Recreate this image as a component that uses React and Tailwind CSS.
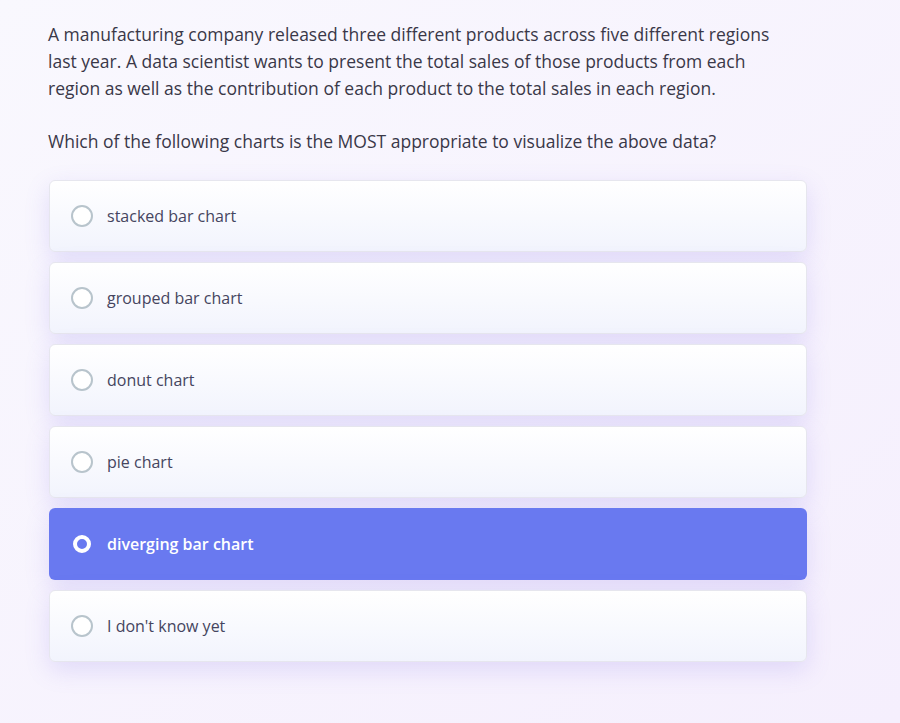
const OPTIONS = [
  "stacked bar chart",
  "grouped bar chart",
  "donut chart",
  "pie chart",
  "diverging bar chart",
  "I don't know yet",
];

export default function App() {
  const selected = 4;

  return (
    <div
      className="min-h-[723px] w-[900px] bg-gradient-to-br from-[#f9f8fe] to-[#f5effd] px-12 pt-[21px] text-[#3a3848]"
      style={{ fontFamily: "'Open Sans', sans-serif" }}
    >
      <div className="w-[748px]">
        <p className="text-[17.5px] leading-[27px]">
          A manufacturing company released three different products across five different regions last year. A data scientist wants to present the total sales of those products from each region as well as the contribution of each product to the total sales in each region.
        </p>
        <p className="mt-[26px] text-[17.5px] leading-[27px]">
          Which of the following charts is the MOST appropriate to visualize the above data?
        </p>
      </div>

      <div className="ml-px mt-[25px] flex w-[758px] flex-col gap-[10px]">
        {OPTIONS.map((label, i) => {
          const active = i === selected;
          return (
            <div
              key={label}
              className={
                active
                  ? "flex h-[72px] items-center rounded-md bg-[#6979f0] pl-[24px] shadow-[0_8px_24px_rgba(120,100,230,0.18)]"
                  : "flex h-[72px] items-center rounded-md border border-[#e6e6ee] bg-gradient-to-b from-white to-[#f2f4fd] pl-[21px] shadow-[0_8px_24px_rgba(120,100,230,0.18)]"
              }
            >
              {active ? (
                <span className="mr-[16px] box-border h-[18px] w-[18px] rounded-full border-[4px] border-white" />
              ) : (
                <span className="mr-[14px] box-border h-[22px] w-[22px] rounded-full border-2 border-[#b8c4cc] bg-white" />
              )}
              <span
                className={
                  active
                    ? "text-[16px] font-semibold text-white"
                    : "text-[16px] text-[#454560]"
                }
              >
                {label}
              </span>
            </div>
          );
        })}
      </div>
    </div>
  );
}
